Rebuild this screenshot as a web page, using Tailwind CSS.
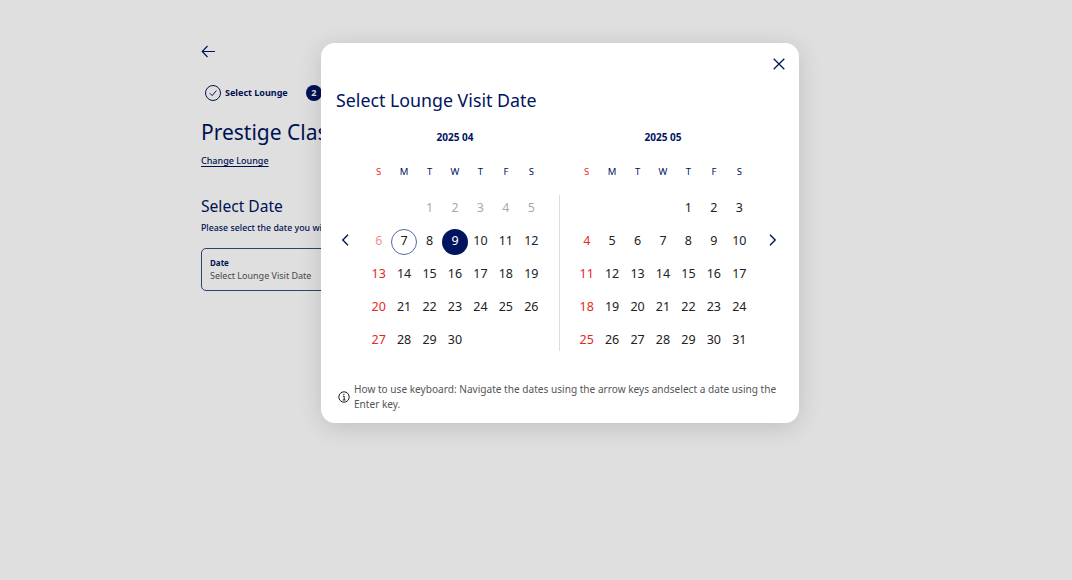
<!DOCTYPE html>
<html lang="en">
  <head>
    <meta charset="UTF-8">
    <title>Select Lounge Visit Date</title>
    <script src="https://cdn.jsdelivr.net/npm/@tailwindcss/browser@4"></script>
  </head>
  <body class="bg-white font-['Noto_Sans',sans-serif] text-[#00145f]">
    <div class="relative w-[1072px] h-[580px] overflow-hidden">

      <!-- page behind the dialog -->
      <div class="pl-[201px] pt-[44px]">
        <svg class="w-[15px] h-[15px]" viewBox="0 0 15 15" fill="none" stroke="#00145f" stroke-width="1.1"><path d="M14 7.5H1.2M6.5 2 1.2 7.5 6.5 13"/></svg>
        <div class="flex items-center mt-[25px] ml-1 h-[18px]">
          <svg class="w-4 h-4" viewBox="0 0 16 16" fill="none" stroke="#00145f" stroke-width="1"><circle cx="8" cy="8" r="7.5"/><path d="M4.8 8.2 7.2 10.6 11.4 5.6"/></svg>
          <span class="ml-1 text-[9px] font-bold">Select Lounge</span>
          <span class="ml-[18px] w-4 h-4 shrink-0 rounded-full bg-[#00145f] text-white text-[9px] font-bold flex items-center justify-center">2</span>
        </div>
        <h1 class="text-[21px] leading-7 mt-[16px]">Prestige Class</h1>
        <a class="block w-fit text-[9px] leading-[14px] mt-[8px] underline underline-offset-2 font-medium">Change Lounge</a>
        <h2 class="text-[15.6px] leading-6 mt-[26px]">Select Date</h2>
        <p class="text-[8.8px] leading-[14px] mt-[3px] font-medium whitespace-nowrap">Please select the date you wish to visit</p>
        <div class="w-[260px] h-[43px] mt-[13px] border border-[#3a4a85] rounded-[5px] pl-2 pt-[8px]">
          <div class="text-[8px] leading-[12px] font-bold">Date</div>
          <div class="text-[9px] leading-[14px] text-[#555]">Select Lounge Visit Date</div>
        </div>
      </div>

      <!-- overlay -->
      <div class="absolute inset-0 bg-black/[.125]"></div>

      <!-- dialog -->
      <div class="absolute left-[321px] top-[43px] w-[478px] h-[380px] bg-white rounded-[14px] shadow-[0_4px_24px_rgba(0,0,0,.14)] px-[15px]">
        <div class="flex justify-end pt-[15px]">
          <svg class="w-3 h-3 -mr-px" viewBox="0 0 12 12" fill="none" stroke="#00145f" stroke-width="1.3"><path d="M.7.7l10.6 10.6M11.3.7.7 11.3"/></svg>
        </div>
        <h2 class="text-[17.8px] leading-6 mt-[18px]">Select Lounge Visit Date</h2>

        <!-- month titles and weekdays -->
        <div class="flex mt-[17px]">
          <div class="ml-[30px] w-[178px]">
            <div class="text-center text-[10px] font-bold leading-[16px]">2025 04</div>
            <div class="grid grid-cols-7 mt-[19px] text-center text-[9.5px] leading-[16px]">
              <span class="text-[#e8281e]">S</span><span>M</span><span>T</span><span>W</span><span>T</span><span>F</span><span>S</span>
            </div>
          </div>
          <div class="ml-[30px] w-[178px]">
            <div class="text-center text-[10px] font-bold leading-[16px]">2025 05</div>
            <div class="grid grid-cols-7 mt-[19px] text-center text-[9.5px] leading-[16px]">
              <span class="text-[#e8281e]">S</span><span>M</span><span>T</span><span>W</span><span>T</span><span>F</span><span>S</span>
            </div>
          </div>
        </div>

        <!-- day grids -->
        <div class="flex mt-[12px] text-[12.5px] text-[#222]">
          <div class="w-[30px] pl-[5px] pt-[42px]">
            <svg class="w-[9px] h-3" viewBox="0 0 9 12" fill="none" stroke="#00145f" stroke-width="1.4"><path d="M7 .8 1.8 6 7 11.2"/></svg>
          </div>

          <div class="w-[178px] grid grid-cols-7 auto-rows-[33px] items-center justify-items-center">
            <span></span><span></span>
            <span class="text-[#aaa]">1</span><span class="text-[#aaa]">2</span><span class="text-[#aaa]">3</span><span class="text-[#aaa]">4</span><span class="text-[#aaa]">5</span>
            <span class="text-[#f2928a]">6</span>
            <span class="w-[26px] h-[26px] rounded-full border border-[#5a6aa0] flex items-center justify-center">7</span>
            <span>8</span>
            <span class="w-[26px] h-[26px] rounded-full bg-[#00145f] text-white flex items-center justify-center">9</span>
            <span>10</span><span>11</span><span>12</span>
            <span class="text-[#e8281e]">13</span><span>14</span><span>15</span><span>16</span><span>17</span><span>18</span><span>19</span>
            <span class="text-[#e8281e]">20</span><span>21</span><span>22</span><span>23</span><span>24</span><span>25</span><span>26</span>
            <span class="text-[#e8281e]">27</span><span>28</span><span>29</span><span>30</span>
          </div>

          <div class="w-px h-[156px] mt-[3px] ml-[15px] mr-[14px] bg-[#ddd]"></div>

          <div class="w-[178px] grid grid-cols-7 auto-rows-[33px] items-center justify-items-center">
            <span></span><span></span><span></span><span></span>
            <span>1</span><span>2</span><span>3</span>
            <span class="text-[#e8281e]">4</span><span>5</span><span>6</span><span>7</span><span>8</span><span>9</span><span>10</span>
            <span class="text-[#e8281e]">11</span><span>12</span><span>13</span><span>14</span><span>15</span><span>16</span><span>17</span>
            <span class="text-[#e8281e]">18</span><span>19</span><span>20</span><span>21</span><span>22</span><span>23</span><span>24</span>
            <span class="text-[#e8281e]">25</span><span>26</span><span>27</span><span>28</span><span>29</span><span>30</span><span>31</span>
          </div>

          <div class="pl-4 pt-[42px]">
            <svg class="w-[9px] h-3" viewBox="0 0 9 12" fill="none" stroke="#00145f" stroke-width="1.4"><path d="M2 .8 7.2 6 2 11.2"/></svg>
          </div>
        </div>

        <!-- keyboard hint -->
        <div class="flex mt-[25px] pl-[2px] pr-[4px] text-[10.1px] leading-[15px] text-[#555]">
          <svg class="w-3 h-3 shrink-0 mt-[8.5px] mr-[4px]" viewBox="0 0 12 12" fill="none" stroke="#222" stroke-width="1"><circle cx="6" cy="6" r="5.2"/><path d="M4.8 5.2H6.2V9M4.6 9H7.6M5.9 2.8V4"/></svg>
          <p>How to use keyboard: Navigate the dates using the arrow keys andselect a date using the Enter key.</p>
        </div>
      </div>
    </div>
  </body>
</html>
